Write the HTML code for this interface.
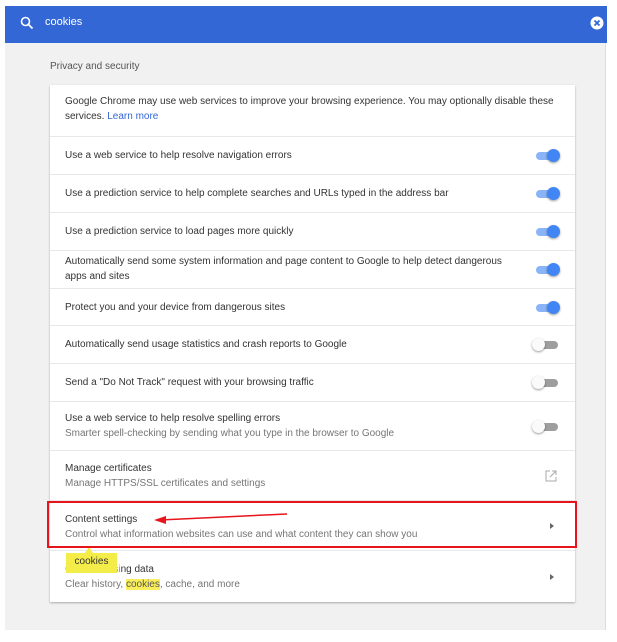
<!DOCTYPE html>
<html><head><style>
body{margin:0;width:617px;height:642px;background:#fff;font-family:"Liberation Sans",sans-serif;position:relative;overflow:hidden}
.top{position:absolute;left:5px;top:6px;width:602px;height:37px;background:#3367d6;}
.bg{position:absolute;left:5px;top:43px;width:600px;height:587px;background:#f1f1f1;border-right:1px solid #ddd}
.card{position:absolute;left:50px;top:85px;width:525px;height:517px;background:#fff;box-shadow:0 1px 2px rgba(0,0,0,.3)}
.row{position:absolute;left:0;width:525px;border-top:1px solid #e8e8e8;box-sizing:border-box}
.t{position:absolute;left:15px;font-size:10px;color:#333;line-height:15px}
.s{color:#757575}
.on,.off{position:absolute;left:486px;width:22px;height:8px;border-radius:4px}
.on{background:#8ab4f8}.off{background:#9e9e9e}
.on:after,.off:after{content:"";position:absolute;top:-3px;width:13px;height:13px;border-radius:50%;box-shadow:0 1px 2px rgba(0,0,0,.4)}
.on:after{left:11px;background:#4285f4}.off:after{left:-4px;background:#fafafa}
.arr{position:absolute;left:500px;width:0;height:0;border-left:4px solid #666;border-top:3.5px solid transparent;border-bottom:3.5px solid transparent}
</style></head><body>
<div class="top">
<svg style="position:absolute;left:15px;top:10px" width="14" height="14" viewBox="0 0 14 14"><circle cx="5.5" cy="5.5" r="4" fill="none" stroke="#fff" stroke-width="1.6"/><path d="M8.5 8.5L12.5 12.5" stroke="#fff" stroke-width="1.8"/></svg>
<div style="position:absolute;left:40px;top:10px;color:#fff;font-size:11px">cookies</div>
<svg style="position:absolute;left:585px;top:10px" width="14" height="14" viewBox="0 0 14 14"><circle cx="7" cy="7" r="6.5" fill="#fff"/><path d="M4.5 4.5L9.5 9.5M9.5 4.5L4.5 9.5" stroke="#3367d6" stroke-width="1.8"/></svg>
</div>
<div class="bg"></div>
<div style="position:absolute;left:50px;top:61px;font-size:10px;color:#555">Privacy and security</div>
<div class="card">
<div class="t" style="top:9px">Google Chrome may use web services to improve your browsing experience. You may optionally disable these services. <span style="color:#3367d6">Learn more</span></div>
<div class="row" style="top:51px;height:38px"><div class="t" style="top:11px">Use a web service to help resolve navigation errors</div><div class="on" style="top:15px"></div></div>
<div class="row" style="top:89px;height:38px"><div class="t" style="top:11px">Use a prediction service to help complete searches and URLs typed in the address bar</div><div class="on" style="top:15px"></div></div>
<div class="row" style="top:127px;height:38px"><div class="t" style="top:11px">Use a prediction service to load pages more quickly</div><div class="on" style="top:15px"></div></div>
<div class="row" style="top:165px;height:38px"><div class="t" style="top:3px;width:460px">Automatically send some system information and page content to Google to help detect dangerous apps and sites</div><div class="on" style="top:15px"></div></div>
<div class="row" style="top:203px;height:37px"><div class="t" style="top:11px">Protect you and your device from dangerous sites</div><div class="on" style="top:15px"></div></div>
<div class="row" style="top:240px;height:38px"><div class="t" style="top:11px">Automatically send usage statistics and crash reports to Google</div><div class="off" style="top:15px"></div></div>
<div class="row" style="top:278px;height:38px"><div class="t" style="top:11px">Send a "Do Not Track" request with your browsing traffic</div><div class="off" style="top:15px"></div></div>
<div class="row" style="top:316px;height:49px"><div class="t" style="top:9px">Use a web service to help resolve spelling errors<br><span class="s">Smarter spell-checking by sending what you type in the browser to Google</span></div><div class="off" style="top:21px"></div></div>
<div class="row" style="top:365px;height:50px"><div class="t" style="top:10px">Manage certificates<br><span class="s">Manage HTTPS/SSL certificates and settings</span></div>
<svg style="position:absolute;left:495px;top:19px" width="12" height="12" viewBox="0 0 12 12"><path d="M5 1H1v10h10V7M7 1h4v4M11 1L5 7" fill="none" stroke="#aaa" stroke-width="1"/></svg></div>
<div class="row" style="top:415px;height:50px"><div class="t" style="top:11px">Content settings<br><span class="s">Control what information websites can use and what content they can show you</span></div><div class="arr" style="top:22px"></div></div>
<div class="row" style="top:465px;height:52px"><div class="t" style="top:11px"><span style="opacity:.5">Clear browsi</span>ng data<br><span class="s">Clear history, <span style="background:#f9ef5c;color:#555">cookies</span>, cache, and more</span></div><div class="arr" style="top:23px"></div></div>
</div>
<div style="position:absolute;left:66px;top:553px;width:51px;height:20px;background:#f4ec48;font-size:10px;text-align:center;line-height:18px;color:#333">cookies</div>
<div style="position:absolute;left:85px;top:547px;width:0;height:0;border-left:4px solid transparent;border-right:4px solid transparent;border-bottom:6px solid #f4ec48"></div>
<div style="position:absolute;left:47px;top:501px;width:530px;height:47px;border:2px solid #e8141c;box-sizing:border-box"></div>
<svg style="position:absolute;left:0;top:0" width="617" height="642"><path d="M287 514L160 520" stroke="#e8141c" stroke-width="1.5"/><path d="M154 520L166 516L166 524Z" fill="#e8141c"/></svg>
</body></html>
